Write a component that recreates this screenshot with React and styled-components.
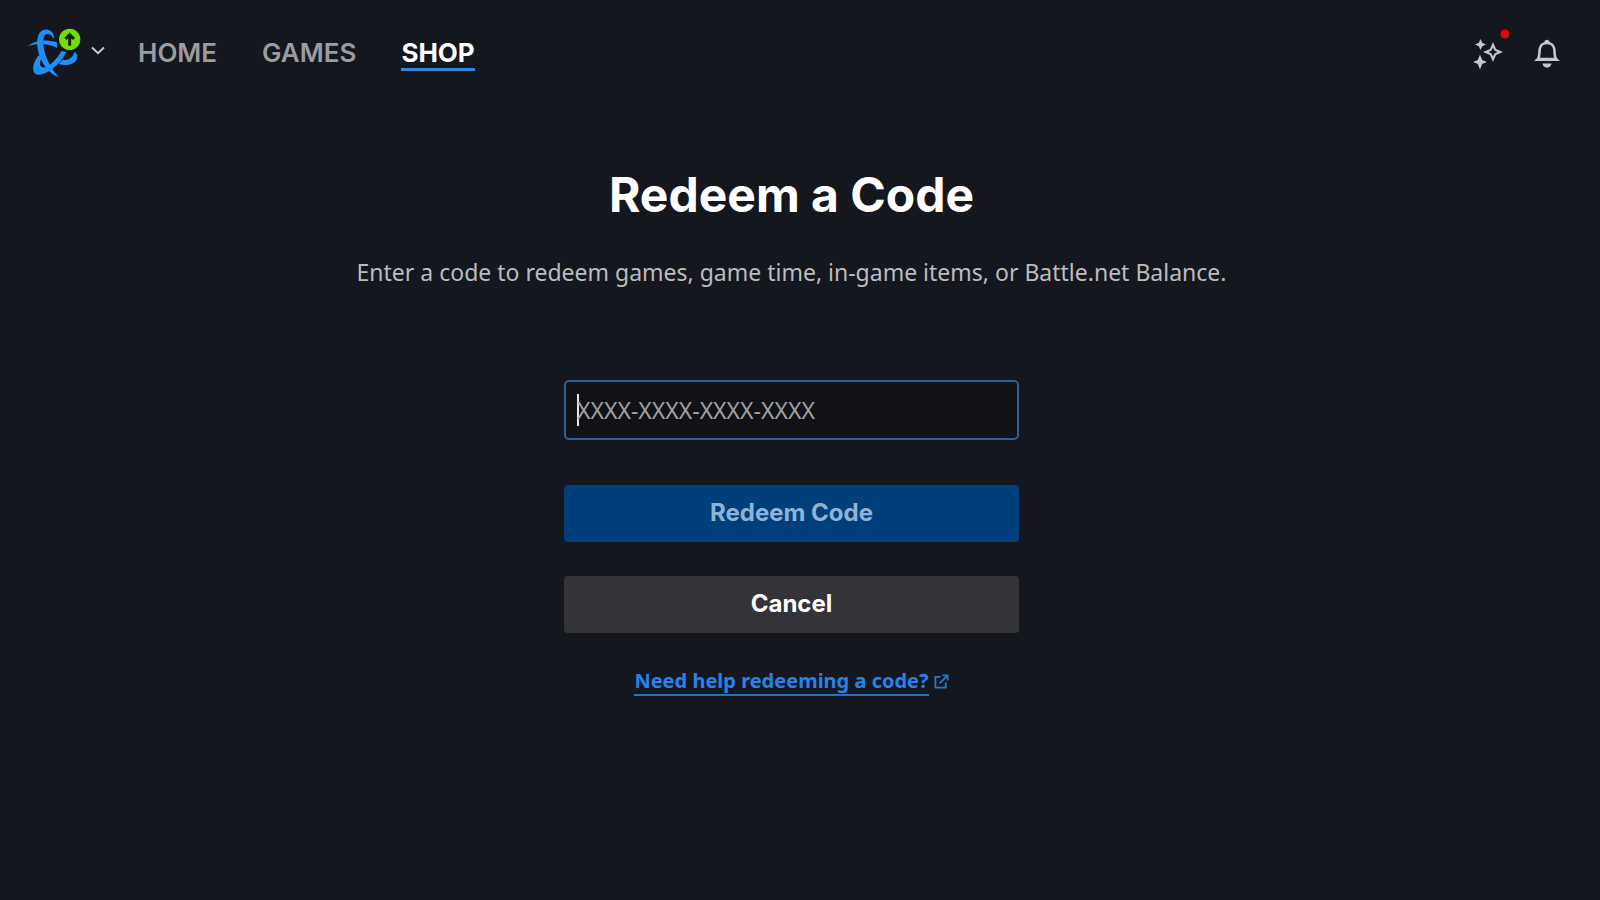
import React from "react";
import styled, { createGlobalStyle } from "styled-components";

const display = `Inter, "Liberation Sans", sans-serif`;
const body = `"Noto Sans", "Open Sans", sans-serif`;

const GlobalStyle = createGlobalStyle`
  * {
    box-sizing: border-box;
  }

  body {
    margin: 0;
    background: #15171e;
    color: #fff;
    font-family: ${body};
  }
`;

const Page = styled.div`
  min-height: 100vh;
  padding-right: 17px;
`;

const Header = styled.header`
  display: flex;
  align-items: center;
  justify-content: space-between;
  height: 104px;
  padding: 0 23px 0 28px;
`;

const HeaderGroup = styled.div`
  display: flex;
  align-items: center;
  gap: ${({ gap }) => gap || "0"};
`;

const IconButton = styled.button`
  display: flex;
  align-items: center;
  gap: 10px;
  padding: 0;
  border: none;
  background: none;
  color: #c6c7ca;
  cursor: pointer;
`;

const Nav = styled.nav`
  display: flex;
  gap: 45px;
  padding-top: 4px;
`;

const NavLink = styled.a`
  border-bottom: 3px solid ${({ $active }) => ($active ? "#2f86e0" : "transparent")};
  color: ${({ $active }) => ($active ? "#fff" : "#9c9c9f")};
  font-family: ${display};
  font-size: 26px;
  font-weight: ${({ $active }) => ($active ? 700 : 600)};
  line-height: 30px;
  text-decoration: none;
`;

const Main = styled.main`
  display: flex;
  flex-direction: column;
  align-items: center;
  padding: 61px 24px;
`;

const Title = styled.h1`
  margin: 0;
  font-family: ${display};
  font-size: 48px;
  font-weight: 700;
  line-height: 60px;
`;

const Intro = styled.p`
  margin: 30px 0 0;
  color: #bbbcbf;
  font-size: 23px;
  line-height: 34px;
  text-align: center;
`;

const Form = styled.form`
  display: flex;
  flex-direction: column;
  width: 100%;
  max-width: 455px;
  margin-top: 91px;
`;

const CodeInput = styled.input`
  height: 60px;
  padding: 0 11px 1px;
  border: 2px solid #2f5f94;
  border-radius: 5px;
  outline: none;
  background: #111216;
  color: #fff;
  font-family: ${body};
  font-size: 23px;

  /* steady caret while the field is empty */
  &:placeholder-shown {
    background: linear-gradient(#e8e8ea, #e8e8ea) 11px center / 2px 32px no-repeat #111216;
    caret-color: transparent;
  }

  &::placeholder {
    color: #a0a0a3;
    opacity: 1;
  }
`;

const Button = styled.button`
  height: 57px;
  margin-top: ${({ $primary }) => ($primary ? "45px" : "34px")};
  padding: 0 16px 2px;
  border: none;
  border-radius: 4px;
  background: ${({ $primary }) => ($primary ? "#013f7a" : "#333338")};
  color: ${({ $primary }) => ($primary ? "#8db3da" : "#fff")};
  font-family: ${display};
  font-size: 24px;
  font-weight: 700;
`;

const HelpLink = styled.a`
  display: flex;
  align-items: center;
  gap: 5px;
  margin-top: 34px;
  color: #2583ee;
  font-size: 20px;
  font-weight: 700;
  line-height: 27px;
  text-decoration: none;
`;

const HelpText = styled.span`
  border-bottom: 2px solid #2871bd;
`;

const Logo = () => (
  <svg width="53" height="52" viewBox="0 -6 159 156" fill="none" aria-hidden="true">
    <g fill="#1f8ff8">
      <path d="M78 33C80 12 62 0 46 6C22 15 23 60 41 98C54 125 76 143 92 147C78 132 65 113 56 91C43 56 42 24 55 19C63 16 70 22 78 33Z" />
      <path d="M0 55C15 39 47 31 86 43C88 49 88 54 87 60C64 48 31 43 0 55Z" />
      <path d="M33 80C14 103 10 130 23 138C45 148 92 118 115 72L101 69C81 101 55 123 44 118C34 114 34 101 40 92Z" />
      <path d="M139 73C148 77 151 87 145 97C136 110 115 116 92 107L103 96C119 98 133 92 139 73Z" />
    </g>
    <circle cx="125" cy="34" r="36" fill="#15171e" />
    <circle cx="125" cy="34" r="32" fill="#72dc08" />
    <path d="M125 53V21M112 33L125 20L138 33" stroke="#10280a" strokeWidth="9" />
  </svg>
);

const Chevron = () => (
  <svg width="14" height="12" viewBox="0 0 14 12" fill="none" aria-hidden="true">
    <path d="M1 1.5L7 7.2L13 1.5" stroke="#c8c9cc" strokeWidth="2" />
  </svg>
);

const Sparkles = () => (
  <svg width="36" height="46" viewBox="0 0 36 46" aria-hidden="true">
    <path
      fill="currentColor"
      fillRule="evenodd"
      d="M20 13L23 20L30 23L23 26L20 33L17 26L10 23L17 20ZM20 18.5L18.5 21.5L15.5 23L18.5 24.5L20 27.5L21.5 24.5L24.5 23L21.5 21.5Z"
    />
    <path fill="currentColor" d="M7.5 10L9.2 13.8L13 15.5L9.2 17.2L7.5 21L5.8 17.2L2 15.5L5.8 13.8Z" />
    <path fill="currentColor" d="M7 25.5L9.2 31L14 33L9.2 35L7 40.5L4.8 35L0 33L4.8 31Z" />
    <circle cx="32" cy="5" r="4.5" fill="#d9080c" />
  </svg>
);

const Bell = () => (
  <svg width="26" height="32" viewBox="0 -3 26 32" fill="none" aria-hidden="true">
    <path
      d="M4 20C6 17 5 14 5.8 9.5C6.6 6 9.3 4 13 4C16.7 4 19.4 6 20.2 9.5C21 14 20 17 22 20"
      stroke="currentColor"
      strokeWidth="2.6"
    />
    <path d="M0 22L3.5 18.8H22.5L26 22Z" fill="currentColor" />
    <path d="M10 4C10.5 -0.5 15.5 -0.5 16 4ZM8.5 24.5H17.5C17 30 9 30 8.5 24.5Z" fill="currentColor" />
  </svg>
);

const ExternalLink = () => (
  <svg width="15" height="15" viewBox="0 0 16 16" fill="none" aria-hidden="true">
    <path d="M7 3H1.5V14.5H12.5V9M9 1.5H14.5V7M14 2L6 10" stroke="#2778c8" strokeWidth="2" />
  </svg>
);

const links = [
  { label: "HOME" },
  { label: "GAMES" },
  { label: "SHOP", active: true },
];

const App = () => (
  <Page>
    <GlobalStyle />
    <Header>
      <HeaderGroup gap="33px">
        <IconButton aria-label="Main menu">
          <Logo />
          <Chevron />
        </IconButton>
        <Nav>
          {links.map(({ label, active }) => (
            <NavLink key={label} href="#" $active={active}>
              {label}
            </NavLink>
          ))}
        </Nav>
      </HeaderGroup>
      <HeaderGroup gap="25px">
        <IconButton aria-label="What's new">
          <Sparkles />
        </IconButton>
        <IconButton aria-label="Notifications">
          <Bell />
        </IconButton>
      </HeaderGroup>
    </Header>
    <Main>
      <Title>Redeem a Code</Title>
      <Intro>
        Enter a code to redeem games, game time, in-game items, or Battle.net Balance.
      </Intro>
      <Form onSubmit={(e) => e.preventDefault()}>
        <CodeInput aria-label="Code" placeholder="XXXX-XXXX-XXXX-XXXX" autoFocus />
        <Button type="submit" $primary disabled>
          Redeem Code
        </Button>
        <Button type="button">Cancel</Button>
      </Form>
      <HelpLink href="#">
        <HelpText>Need help redeeming a code?</HelpText>
        <ExternalLink />
      </HelpLink>
    </Main>
  </Page>
);

export default App;
